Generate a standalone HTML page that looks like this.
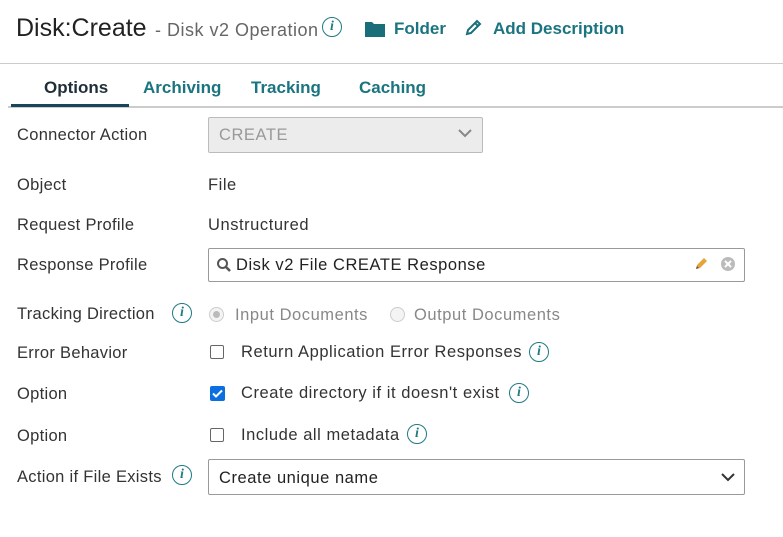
<!DOCTYPE html>
<html><head><meta charset="utf-8"><style>
body{margin:0;width:783px;height:537px;background:#fff;font-family:"Liberation Sans",sans-serif;color:#333;position:relative;overflow:hidden}
.a{position:absolute;white-space:nowrap}
.t{letter-spacing:0.55px}
.lbl{font-size:16.5px;color:#333;left:17px;letter-spacing:0.3px}
.info{position:absolute;width:18px;height:18px;border:1.5px solid #1f7a84;border-radius:50%;color:#1f7a84;font:italic bold 14px "Liberation Serif",serif;text-align:center;line-height:18px}
.cb{position:absolute;width:12px;height:12px;border:1.5px solid #666;border-radius:2px;background:#fff}
.teal{color:#1a7580;font-weight:bold;font-size:17px}
</style></head><body>
<div class="a" style="left:16px;top:14px;font-size:25px;color:#222">Disk:Create</div>
<div class="a" style="left:155px;top:20px;font-size:18px;color:#666;letter-spacing:0.5px">- Disk v2 Operation</div>
<div class="info" style="left:322px;top:17px">i</div>
<svg class="a" style="left:365px;top:21px" width="20" height="16" viewBox="0 0 20 16"><path d="M0 1h7l2 2h11v13H0z" fill="#1a6e7a"/></svg>
<div class="a teal" style="left:394px;top:19px">Folder</div>
<svg class="a" style="left:464px;top:19px" width="18" height="18" viewBox="0 0 18 18"><path d="M3 15l1-4 9-9 3 3-9 9zM11 4l3 3" fill="none" stroke="#1a6e7a" stroke-width="2"/></svg>
<div class="a teal" style="left:493px;top:19px">Add Description</div>
<div class="a" style="left:0;top:63px;width:783px;height:1px;background:#ccc"></div>
<div class="a" style="left:44px;top:78px;font-size:17px;font-weight:bold;color:#1f2f3a">Options</div>
<div class="a teal" style="left:143px;top:78px">Archiving</div>
<div class="a teal" style="left:251px;top:78px">Tracking</div>
<div class="a teal" style="left:359px;top:78px">Caching</div>
<div class="a" style="left:8px;top:106px;width:775px;height:2px;background:#ccc"></div>
<div class="a" style="left:11px;top:104px;width:118px;height:3px;background:#17465a"></div>

<div class="a lbl" style="top:126px">Connector Action</div>
<div class="a" style="left:208px;top:117px;width:273px;height:34px;background:#ececec;border:1px solid #bbb;border-radius:2px"></div>
<div class="a t" style="left:219px;top:126px;font-size:16.5px;color:#999">CREATE</div>
<svg class="a" style="left:457px;top:128px" width="16" height="10"><path d="M2 2l6 6 6-6" fill="none" stroke="#888" stroke-width="2"/></svg>

<div class="a lbl" style="top:176px">Object</div>
<div class="a t" style="left:208px;top:176px;font-size:16.5px">File</div>
<div class="a lbl" style="top:216px">Request Profile</div>
<div class="a t" style="left:208px;top:216px;font-size:16.5px">Unstructured</div>
<div class="a lbl" style="top:256px">Response Profile</div>
<div class="a" style="left:208px;top:248px;width:535px;height:32px;border:1px solid #999;border-radius:2px"></div>
<svg class="a" style="left:216px;top:257px" width="16" height="16"><circle cx="6.5" cy="6.5" r="4.5" fill="none" stroke="#555" stroke-width="2"/><path d="M10 10l4 4" stroke="#555" stroke-width="2.5"/></svg>
<div class="a t" style="left:236px;top:256px;font-size:16.5px;color:#222">Disk v2 File CREATE Response</div>
<svg class="a" style="left:693px;top:256px" width="16" height="16"><path d="M3 13l1-4 7-7 3 3-7 7z" fill="#e8a33a"/><path d="M3 13l1-3 2 2z" fill="#555"/></svg>
<svg class="a" style="left:720px;top:256px" width="16" height="16"><circle cx="8" cy="8" r="7" fill="#bbb"/><path d="M5 5l6 6M11 5l-6 6" stroke="#fff" stroke-width="2"/></svg>

<div class="a lbl" style="top:305px">Tracking Direction</div>
<div class="info" style="left:172px;top:303px">i</div>
<div class="a" style="left:209px;top:307px;width:13px;height:13px;border:1px solid #ccc;border-radius:50%;background:#f4f4f4"></div>
<div class="a" style="left:213px;top:311px;width:7px;height:7px;border-radius:50%;background:#bbb"></div>
<div class="a t" style="left:235px;top:306px;font-size:16.5px;color:#888">Input Documents</div>
<div class="a" style="left:390px;top:307px;width:13px;height:13px;border:1px solid #ccc;border-radius:50%;background:#f4f4f4"></div>
<div class="a t" style="left:414px;top:306px;font-size:16.5px;color:#888">Output Documents</div>

<div class="a lbl" style="top:344px">Error Behavior</div>
<div class="cb" style="left:210px;top:345px"></div>
<div class="a t" style="left:241px;top:343px;font-size:16.5px">Return Application Error Responses</div>
<div class="info" style="left:529px;top:342px">i</div>

<div class="a lbl" style="top:385px">Option</div>
<div class="a" style="left:210px;top:386px;width:15px;height:15px;background:#0b6fe0;border-radius:2px"></div>
<svg class="a" style="left:210px;top:386px" width="15" height="15"><path d="M3 7.5l3 3 6-6" fill="none" stroke="#fff" stroke-width="2"/></svg>
<div class="a t" style="left:241px;top:384px;font-size:16.5px">Create directory if it doesn't exist</div>
<div class="info" style="left:509px;top:383px">i</div>

<div class="a lbl" style="top:427px">Option</div>
<div class="cb" style="left:210px;top:428px"></div>
<div class="a t" style="left:241px;top:426px;font-size:16.5px">Include all metadata</div>
<div class="info" style="left:407px;top:424px">i</div>

<div class="a lbl" style="top:468px">Action if File Exists</div>
<div class="info" style="left:172px;top:465px">i</div>
<div class="a" style="left:208px;top:459px;width:535px;height:34px;border:1px solid #999;border-radius:2px"></div>
<div class="a t" style="left:219px;top:469px;font-size:16.5px;color:#222">Create unique name</div>
<svg class="a" style="left:720px;top:472px" width="16" height="10"><path d="M2 2l6 6 6-6" fill="none" stroke="#333" stroke-width="2"/></svg>
</body></html>
